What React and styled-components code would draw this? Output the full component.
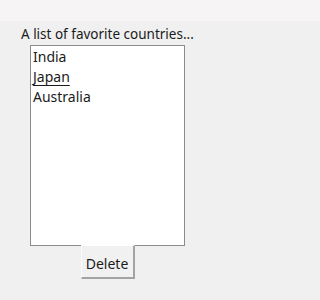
import React from 'react';
import styled, {createGlobalStyle} from 'styled-components';

const GlobalStyle = createGlobalStyle`
	html, body {
		margin: 0;
		padding: 0;
		background: #f0f0f0;
	}
	body {
		font-family: 'Noto Sans', 'Open Sans', sans-serif;
		color: #1b1b1b;
	}
`;

const countries = ['India', 'Japan', 'Australia'];

const App = () => (
	<>
		<GlobalStyle />
		<StyledTitleBar />
		<StyledWindow>
			<StyledLabel>A list of favorite countries...</StyledLabel>
			<StyledColumn>
				<StyledList>
					{countries.map((name, i) => (
						<StyledItem key={name} focused={i === 1}>
							{name}
						</StyledItem>
					))}
				</StyledList>
				<StyledButton type='button'>Delete</StyledButton>
			</StyledColumn>
		</StyledWindow>
	</>
);

const StyledTitleBar = styled.div`
	height: 21px;
	background: #f6f4f4;
`;
const StyledWindow = styled.div`
	display: flex;
	flex-direction: column;
	padding: 3px 0 0 21px;
`;
const StyledLabel = styled.div`
	font-size: 13.5px;
	line-height: 20px;
	white-space: nowrap;
`;
const StyledColumn = styled.div`
	display: flex;
	flex-direction: column;
	align-items: center;
	width: 155px;
	margin-left: 9px;
	margin-top: 1px;
`;
const StyledList = styled.div`
	box-sizing: border-box;
	width: 155px;
	height: 201px;
	background: #fff;
	border: 1px solid #8c8c8c;
	padding: 1px 0 0 2px;
`;
const StyledItem = styled.div.withConfig({shouldForwardProp: p => p !== 'focused'})`
	font-size: 14px;
	line-height: 20px;
	text-decoration: ${p => (p.focused ? 'underline' : 'none')};
	text-underline-offset: 3px;
`;
const StyledButton = styled.button`
	box-sizing: border-box;
	width: 54px;
	height: 34px;
	margin-top: -1px;
	padding: 3px 0 0;
	background: #f1f1f1;
	border: none;
	border-top: 1px solid #fff;
	border-left: 1px solid #fafafa;
	border-right: 2px solid #a3a3a3;
	border-bottom: 2px solid #a3a3a3;
	font-family: 'Noto Sans', 'Open Sans', sans-serif;
	font-size: 14px;
	color: #1b1b1b;
`;

export default App;
